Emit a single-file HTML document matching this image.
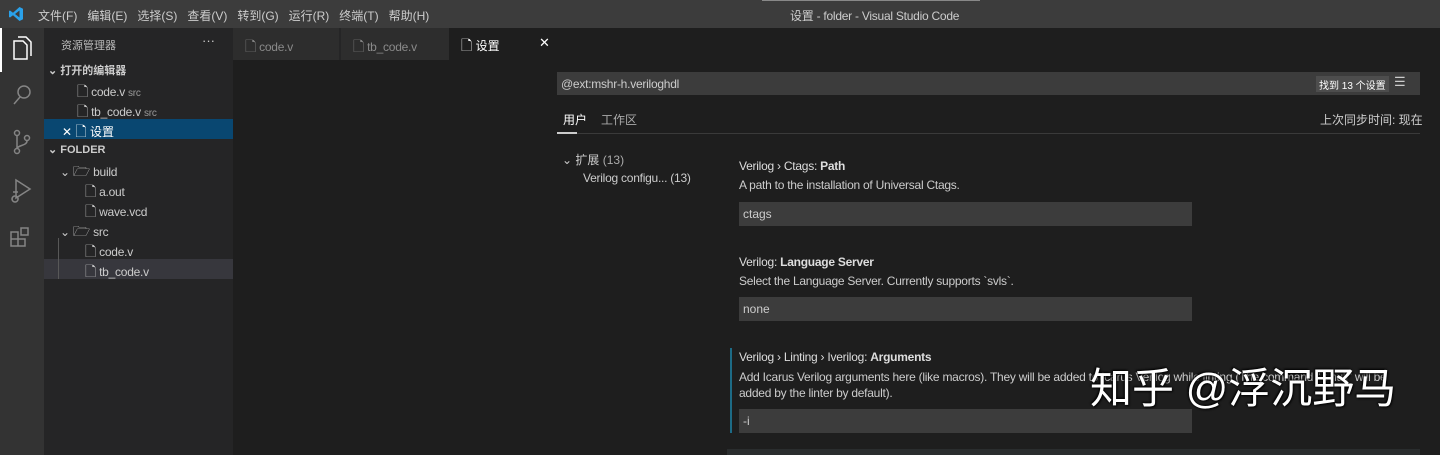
<!DOCTYPE html>
<html><head><meta charset="utf-8"><style>
*{margin:0;padding:0;box-sizing:border-box}
body{width:1440px;height:455px;overflow:hidden;background:#1e1e1e;font-family:"Liberation Sans","Noto Sans CJK SC",sans-serif;color:#ccc;font-size:12px;position:relative}
.a{position:absolute;white-space:nowrap}
.n{letter-spacing:-0.25px}
.f{font-size:14px}
</style></head><body>
<div class="a" style="left:0;top:0;width:1440px;height:28px;background:#3c3c3c"></div>
<div class="a" style="left:762px;top:0;width:218px;height:1px;background:#888"></div>
<svg class="a" style="left:8px;top:6px" width="16" height="16" viewBox="0 0 16 16"><path d="M11.5 1 L15 2.7 V13.3 L11.5 15 L5 9.3 L2 11.5 L1 11 V5 L2 4.5 L5 6.7 Z M11.5 4.5 L7 8 L11.5 11.5Z" fill="#2aa1ea" fill-rule="evenodd"/></svg>
<div class="a" style="left:38px;top:7px;font-size:12px;color:#ccc">文件(F)&nbsp;&nbsp;&nbsp;编辑(E)&nbsp;&nbsp;&nbsp;选择(S)&nbsp;&nbsp;&nbsp;查看(V)&nbsp;&nbsp;&nbsp;转到(G)&nbsp;&nbsp;&nbsp;运行(R)&nbsp;&nbsp;&nbsp;终端(T)&nbsp;&nbsp;&nbsp;帮助(H)</div>
<div class="a n" style="left:790px;top:7px;font-size:12px;color:#ccc">设置 - folder - Visual Studio Code</div>
<!-- activity bar -->
<div class="a" style="left:0;top:28px;width:44px;height:427px;background:#333"></div>
<div class="a" style="left:0;top:28px;width:2px;height:44px;background:#fff"></div>
<svg class="a" style="left:8px;top:34px" width="28" height="220" viewBox="0 0 28 220" fill="none" stroke="#fff" stroke-width="1.5">
<path d="M6 7h9l4 4v14H6z M10 3h8l5 5v14"/>
<g stroke="#858585"><circle cx="16" cy="58" r="6"/><path d="M12 63l-6 7"/>
<circle cx="9" cy="99" r="2.5"/><circle cx="9" cy="117" r="2.5"/><circle cx="19" cy="104" r="2.5"/><path d="M9 101v14 M19 107c0 5-10 4-10 8"/>
<path d="M8 146l14 9-14 9z M5 158h5 M7 162a3 3 0 1 0 0.1 0"/>
<path d="M3 205h7v7H3z M10 205h7v7h-7z M3 198h7v7H3z M13 194h7v7h-7z"/></g>
</svg>
<!-- sidebar -->
<div class="a" style="left:44px;top:28px;width:189px;height:427px;background:#252526"></div>
<div class="a" style="left:61px;top:37px;font-size:11px;color:#bbb">资源管理器</div>
<div class="a" style="left:202px;top:33px;font-size:13px;color:#ccc">···</div>
<div class="a" style="left:48px;top:62px;font-size:11px;font-weight:bold;color:#ccc">⌄ 打开的编辑器</div>
<div class="a" style="left:44px;top:119px;width:189px;height:20px;background:#094771"></div>
<div class="a" style="left:44px;top:259px;width:189px;height:20px;background:#37373d"></div>
<div class="a n" style="left:77px;top:81px;color:#ccc"><span class="f">🗋</span> code.v <span style="font-size:10px;color:#999">src</span></div>
<div class="a n" style="left:77px;top:101px;color:#ccc"><span class="f">🗋</span> tb_code.v <span style="font-size:10px;color:#999">src</span></div>
<div class="a" style="left:62px;top:121px;color:#fff">✕ <span class="f">🗋</span> 设置</div>
<div class="a" style="left:48px;top:143px;font-size:11px;font-weight:bold;color:#ccc">⌄ FOLDER</div>
<div class="a n" style="left:60px;top:161px;color:#ccc">⌄ <span class="f">🗁</span> build</div>
<div class="a n" style="left:85px;top:181px;color:#ccc"><span class="f">🗋</span> a.out</div>
<div class="a n" style="left:85px;top:201px;color:#ccc"><span class="f">🗋</span> wave.vcd</div>
<div class="a n" style="left:60px;top:221px;color:#ccc">⌄ <span class="f">🗁</span> src</div>
<div class="a n" style="left:85px;top:241px;color:#ccc"><span class="f">🗋</span> code.v</div>
<div class="a n" style="left:85px;top:261px;color:#ccc"><span class="f">🗋</span> tb_code.v</div>
<div class="a" style="left:58px;top:238px;width:1px;height:41px;background:#585858"></div>
<!-- tabs -->
<div class="a" style="left:233px;top:28px;width:325px;height:32px;background:#252526"></div>
<div class="a" style="left:233px;top:28px;width:107px;height:32px;background:#2d2d2d;border-right:1px solid #252526"></div>
<div class="a" style="left:341px;top:28px;width:108px;height:32px;background:#2d2d2d"></div>
<div class="a" style="left:449px;top:28px;width:109px;height:32px;background:#1e1e1e"></div>
<div class="a n" style="left:245px;top:36px;color:#8a8a8a"><span class="f">🗋</span> code.v</div>
<div class="a n" style="left:353px;top:36px;color:#8a8a8a"><span class="f">🗋</span> tb_code.v</div>
<div class="a" style="left:461px;top:35px;color:#fff"><span class="f">🗋</span> 设置</div>
<div class="a" style="left:539px;top:35px;font-size:13px;color:#fff">✕</div>
<!-- settings -->
<div class="a" style="left:557px;top:72px;width:863px;height:23px;background:#3c3c3c"></div>
<div class="a n" style="left:561px;top:77px;color:#ccc">@ext:mshr-h.veriloghdl</div>
<div class="a" style="left:1316px;top:76px;height:16px;padding:1px 3px;background:#4d4d4d;font-size:10px;color:#fff">找到 13 个设置</div>
<div class="a" style="left:1394px;top:74px;font-size:13px;color:#ccc">☰</div>
<div class="a" style="left:563px;top:111px;color:#fff">用户</div>
<div class="a" style="left:601px;top:111px;color:#aaa">工作区</div>
<div class="a" style="left:1320px;top:111px;color:#ccc">上次同步时间: 现在</div>
<div class="a" style="left:557px;top:133px;width:863px;height:1px;background:#3a3a3a"></div>
<div class="a" style="left:557px;top:132px;width:20px;height:2px;background:#ccc"></div>
<div class="a" style="left:562px;top:151px;color:#ccc">⌄ 扩展 <span style="color:#aaa">(13)</span></div>
<div class="a n" style="left:583px;top:171px;color:#ccc">Verilog configu... (13)</div>
<div class="a n" style="left:739px;top:159px;color:#ddd">Verilog › Ctags: <b>Path</b></div>
<div class="a n" style="left:739px;top:178px;color:#ccc">A path to the installation of Universal Ctags.</div>
<div class="a" style="left:739px;top:202px;width:453px;height:24px;background:#3c3c3c"></div>
<div class="a" style="left:743px;top:207px;color:#ccc">ctags</div>
<div class="a n" style="left:739px;top:255px;color:#ddd">Verilog: <b>Language Server</b></div>
<div class="a n" style="left:739px;top:274px;color:#ccc">Select the Language Server. Currently supports `svls`.</div>
<div class="a" style="left:739px;top:297px;width:453px;height:24px;background:#3c3c3c"></div>
<div class="a" style="left:743px;top:302px;color:#ccc">none</div>
<div class="a" style="left:730px;top:348px;width:2px;height:85px;background:#1d6b86"></div>
<div class="a n" style="left:739px;top:350px;color:#ddd">Verilog › Linting › Iverilog: <b>Arguments</b></div>
<div class="a n" style="left:739px;top:369px;color:#ccc;line-height:16px;white-space:normal;width:675px">Add Icarus Verilog arguments here (like macros). They will be added to Icarus Verilog while linting (The command "-t null" will be added by the linter by default).</div>
<div class="a" style="left:739px;top:409px;width:453px;height:24px;background:#3c3c3c"></div>
<div class="a" style="left:743px;top:414px;color:#ccc">-i</div>
<div class="a" style="left:727px;top:449px;width:693px;height:6px;background:#2a2d2e"></div>
<div class="a" style="left:1090px;top:364px;font-size:42px;line-height:50px;color:#fff;text-shadow:1px 1px 2px #000,-1px -1px 2px #000">知乎 @浮沉野马</div>
</body></html>
